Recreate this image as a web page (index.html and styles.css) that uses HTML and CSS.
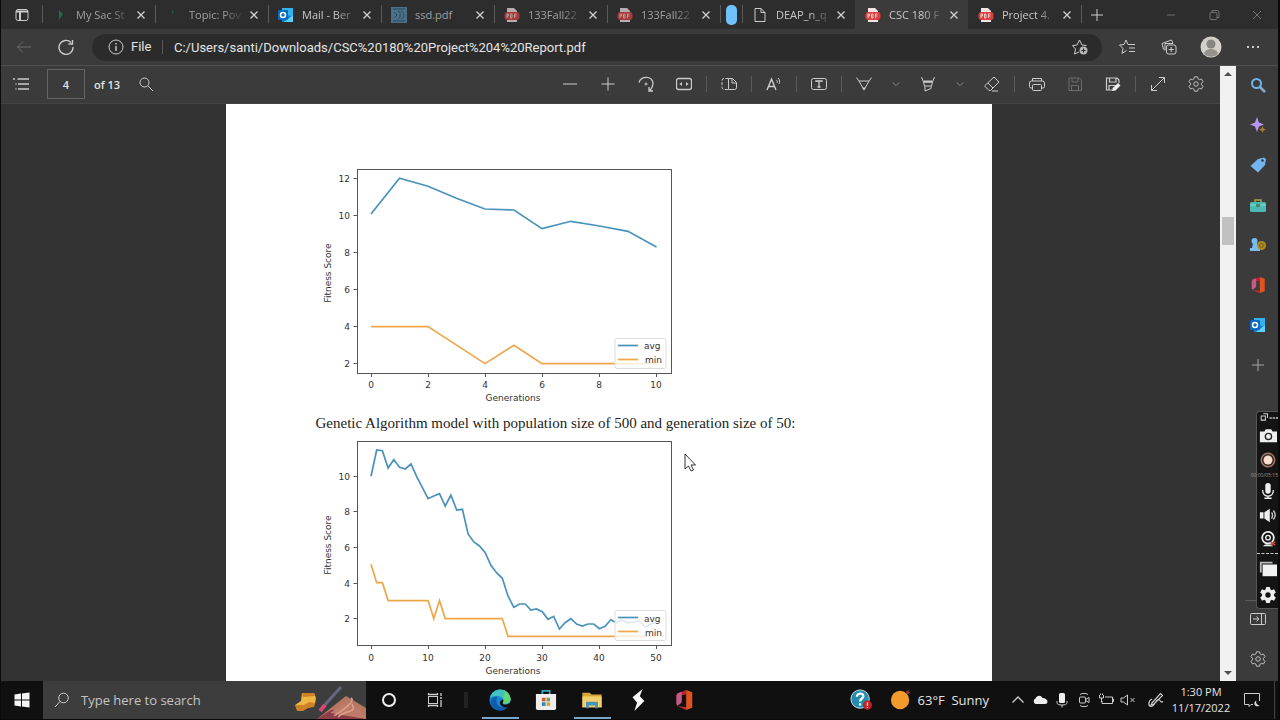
FILE: index.html
```
<!DOCTYPE html>
<html lang="en">

<head>
    <meta charset="UTF-8">
    <meta name="viewport" content="width=device-width, initial-scale=1.0">
    <link rel="stylesheet" href="styles.css">
    <title>CSC 180 Project 4 Report.pdf</title>
</head>

<body>

    <!-- shared icons -->
    <svg class="defs" width="0" height="0">
        <symbol id="i-close" viewBox="0 0 16 16"><path d="M4 4l8 8M12 4l-8 8" /></symbol>
        <symbol id="i-pdf" viewBox="0 0 16 16">
            <path d="M3 1h7l3 3v11H3z" fill="#f3e4e2" stroke="none" />
            <rect x="0.500" y="5" width="15" height="8" rx="3" fill="#d8413f" stroke="none" />
            <path d="M3 11V7h1.500v2H3M6.500 7v4h1.500V7zM10.500 11V7h2M10.500 9h2" stroke="#f6c9c5" stroke-width="1" />
        </symbol>
        <symbol id="i-chevron" viewBox="0 0 12 12"><path d="M2 4l4 4 4-4" /></symbol>
        <symbol id="i-gear" viewBox="0 0 20 20">
            <path d="M8.300 2h3.400l.6 2.300 1.500.9 2.300-.7 1.700 2.900-1.700 1.700v1.800l1.700 1.700-1.700 2.900-2.300-.7-1.500.9-.6 2.300H8.300l-.6-2.300-1.500-.9-2.300.7-1.700-2.900 1.700-1.700V9.100L2.200 7.400l1.700-2.900 2.300.7 1.500-.9z" />
            <circle cx="10" cy="10" r="2.500" />
        </symbol>
        <symbol id="i-office" viewBox="0 0 20 20">
            <path d="M12 1L4 4v11l3-2V6l5-1z" fill="#b3263a" stroke="none" />
            <path d="M4 4l4-1.500V12l-4 3.500-1-2V6z" fill="#c65a83" stroke="none" />
            <path d="M12 1l5.500 2v14L12 19z" fill="#e2521d" stroke="none" />
            <path d="M4 15.500l8 1V19z" fill="#c9301c" stroke="none" />
        </symbol>
        <symbol id="i-outlook" viewBox="0 0 16 16">
            <rect x="4" y="1" width="11" height="9" fill="#35b1ee" stroke="none" />
            <path d="M4 8l11 1v6H4z" fill="#1180d4" stroke="none" />
            <path d="M15 8v7H6z" fill="#5fd0f7" stroke="none" />
            <rect x="0" y="3" width="10" height="10" rx="1" fill="#0a69c0" stroke="none" />
            <circle cx="5" cy="8" r="2.500" stroke="#fff" stroke-width="1.500" />
        </symbol>
    </svg>

    <div class="tab-bar">
        <button class="tab-actions" aria-label="Tab actions"><svg class="icon" viewBox="0 0 16 16"><rect x="2" y="2.500" width="12" height="11" rx="2" /><path d="M2 4.500h12M6 5v8" stroke-width="2" /></svg></button>
        <div class="tab dim">
            <svg class="favicon" viewBox="0 0 16 16"><path d="M7 3l4 4-4 6z" fill="#246b40" stroke="none" /></svg>
            <span class="tab-title">My Sac St</span>
            <button class="tab-close" aria-label="Close tab"><svg><use href="#i-close" /></svg></button>
        </div>
        <div class="tab dim">
            <svg class="favicon" viewBox="0 0 16 16"><path d="M7 3l2 2-2 3z" fill="#24583a" stroke="none" /></svg>
            <span class="tab-title">Topic: Pov</span>
            <button class="tab-close" aria-label="Close tab"><svg><use href="#i-close" /></svg></button>
        </div>
        <div class="tab">
            <svg class="favicon"><use href="#i-outlook" /></svg>
            <span class="tab-title">Mail - Ber</span>
            <button class="tab-close" aria-label="Close tab"><svg><use href="#i-close" /></svg></button>
        </div>
        <div class="tab dim">
            <svg class="favicon" viewBox="0 0 16 16"><rect width="16" height="16" fill="#4b7188" stroke="none" /><path d="M3 5l3 3-3 3M7 4c3 0 3 8 0 8M10 4c4 1 4 7 0 8M2 2h12M2 14h12" stroke="#29495f" /></svg>
            <span class="tab-title short">ssd.pdf</span>
            <button class="tab-close" aria-label="Close tab"><svg><use href="#i-close" /></svg></button>
        </div>
        <div class="tab dim">
            <svg class="favicon faded"><use href="#i-pdf" /></svg>
            <span class="tab-title">133Fall22</span>
            <button class="tab-close" aria-label="Close tab"><svg><use href="#i-close" /></svg></button>
        </div>
        <div class="tab dim">
            <svg class="favicon faded"><use href="#i-pdf" /></svg>
            <span class="tab-title">133Fall22</span>
            <button class="tab-close" aria-label="Close tab"><svg><use href="#i-close" /></svg></button>
        </div>
        <button class="tab-group" aria-label="Tab group"><span class="pill"></span></button>
        <div class="tab">
            <svg class="favicon" viewBox="0 0 16 16"><path d="M3 1.500h6l4 4v9H3zM9 1.500v4h4" /></svg>
            <span class="tab-title">DEAP_n_q</span>
            <button class="tab-close" aria-label="Close tab"><svg><use href="#i-close" /></svg></button>
        </div>
        <div class="tab active">
            <svg class="favicon"><use href="#i-pdf" /></svg>
            <span class="tab-title">CSC 180 F</span>
            <button class="tab-close" aria-label="Close tab"><svg><use href="#i-close" /></svg></button>
        </div>
        <div class="tab">
            <svg class="favicon"><use href="#i-pdf" /></svg>
            <span class="tab-title">Project 4.</span>
            <button class="tab-close" aria-label="Close tab"><svg><use href="#i-close" /></svg></button>
        </div>
        <button class="new-tab" aria-label="New tab"><svg class="icon" viewBox="0 0 16 16"><path d="M8 2v12M2 8h12" /></svg></button>
        <div class="window-buttons">
            <button aria-label="Minimize"><svg class="icon" viewBox="0 0 16 16"><path d="M4 8h8" /></svg></button>
            <button aria-label="Restore"><svg class="icon" viewBox="0 0 16 16"><rect x="4" y="5.500" width="7" height="7" rx="1" /><path d="M6 5.500v-2h5a2 2 0 0 1 2 2v5h-2" /></svg></button>
            <button aria-label="Close"><svg class="icon" viewBox="0 0 16 16"><path d="M4 4l8 8M12 4l-8 8" /></svg></button>
        </div>
    </div>

    <div class="address-bar">
        <button class="nav-btn disabled" aria-label="Back"><svg class="icon" viewBox="0 0 16 16"><path d="M15 8H1.500M7 2.500L1.500 8 7 13.500" /></svg></button>
        <button class="nav-btn" aria-label="Refresh"><svg class="icon" viewBox="0 0 16 16"><path d="M13 3.500A7 7 0 1 0 15 8M14.500 1v4h-4" stroke-width="1.400" /></svg></button>
        <div class="omnibox">
            <svg class="icon" viewBox="0 0 16 16"><circle cx="8" cy="8" r="7" /><path d="M8 7v5M8 4v1.500" stroke-width="1.400" /></svg>
            <label class="scheme" for="url">File</label>
            <input class="url" id="url" type="text" value="C:/Users/santi/Downloads/CSC%20180%20Project%204%20Report.pdf">
            <button class="star" aria-label="Add to favorites"><svg class="icon" viewBox="0 0 16 16"><path d="M7 13l-4.500 2 1-5L0.500 6.500l4.500-.5 2.500-5 2.500 5 4.500.5" /><circle cx="11.500" cy="11.500" r="4" fill="#b5b5b5" stroke="none" /><path d="M11.500 9.500v4M9.500 11.500h4" stroke="#2b2b2b" /></svg></button>
        </div>
        <div class="browser-buttons">
            <button aria-label="Favorites"><svg class="icon" viewBox="0 0 16 16"><path d="M9 5.500h7M10 9h6M10 12.500h6M7.500 11.500L3 14.500l1-5L0.500 6l4.500-.5L7 1l2 4.500" /></svg></button>
            <button aria-label="Collections"><svg class="icon" viewBox="0 0 16 16"><path d="M4 11.500L2.500 10 1 4.500 10.500 1l1.500 3" /><path d="M4 11V4.500h8" /><rect x="5.500" y="6" width="9.500" height="9" rx="2" /><path d="M10.200 8v5M7.700 10.500h5" /></svg></button>
            <button aria-label="Profile"><svg class="avatar" viewBox="0 0 22 22"><circle cx="11" cy="11" r="10.500" fill="#d4d1cb" /><circle cx="11" cy="8" r="4.500" fill="#898681" /><path d="M4 18a7 5 0 0 1 14 0 10 10 0 0 1-14 0z" fill="#96938e" /></svg></button>
            <button aria-label="Settings and more"><svg class="icon" viewBox="0 0 16 16"><path d="M2 8h2M7 8h2M12 8h2" stroke-width="2" /></svg></button>
        </div>
    </div>

    <div class="main">
        <div class="reader">
            <div class="pdf-toolbar">
                <button class="tool" aria-label="Contents"><svg class="icon" viewBox="0 0 16 16"><path d="M0 3h2M4.500 3H16M5 8h11M5 13h11M2.500 8h1M2.500 13h1" stroke-width="1.300" /></svg></button>
                <input class="page-number" id="page" type="text" value="4">
                <label class="page-total" for="page">of 13</label>
                <button class="tool" aria-label="Find"><svg class="icon" viewBox="0 0 16 16"><circle cx="6.500" cy="6.500" r="4.500" /><path d="M10 10l5 5" /></svg></button>

                <div class="tools">
                    <button class="tool" aria-label="Zoom out"><svg class="icon" viewBox="0 0 16 16"><path d="M1 8h14" /></svg></button>
                    <button class="tool" aria-label="Zoom in"><svg class="icon" viewBox="0 0 16 16"><path d="M1.500 8h13M8 1.500v13" /></svg></button>
                    <button class="tool" aria-label="Rotate"><svg class="icon" viewBox="0 0 16 16"><path d="M1 6.500C3-0.500 14-0.500 15 7c.3 3-1 5-3 7.500M11 11v4h4" stroke-width="1.300" /><circle cx="8" cy="8" r="1" /></svg></button>
                    <button class="tool" aria-label="Fit to width"><svg class="icon" viewBox="0 0 16 16"><rect x="0.500" y="2.500" width="15" height="11" rx="2" stroke-width="1.300" /><path d="M6 6L3.500 8 6 10zM10 6l2.500 2-2.500 2z" fill="#ccc" stroke="none" /></svg></button>
                    <span class="divider"></span>
                    <button class="tool" aria-label="Page view"><svg class="icon" viewBox="0 0 16 16"><path d="M7.500 2.500H3a2 2 0 0 0-2 2v7a2 2 0 0 0 2 2h4.500" stroke-dasharray="3 1.500" /><path d="M7.500 2.500h4l4 4v5a2 2 0 0 1-2 2h-6zM11 3v4h4" /></svg></button>
                    <span class="divider"></span>
                    <button class="tool" aria-label="Read aloud"><svg class="icon" viewBox="0 0 16 16"><path d="M1 14L5.500 3 10 14M2.500 10.500h6" stroke-width="1.400" /><path d="M10.500 4c1 1 1 2 .5 3M12 2c2 2 2 4 1 6" /></svg></button>
                    <span class="divider"></span>
                    <button class="tool" aria-label="Add text"><svg class="icon" viewBox="0 0 16 16"><rect x="0.500" y="2.500" width="15" height="11" rx="2" /><path d="M5 6V5h6v1M8 5v6M6.500 11h3" stroke-width="1.300" /></svg></button>
                    <span class="divider"></span>
                    <button class="tool" aria-label="Draw"><svg class="icon" viewBox="0 0 16 16"><path d="M0.500 1.500L3 5h10l2.500-3.500M3 5l5 9 5-9" /><path d="M6.300 11.500h3.400L8 14.500z" fill="#ccc" stroke="none" /></svg></button>
                    <button class="tool-menu" aria-label="Draw options"><svg><use href="#i-chevron" /></svg></button>
                    <button class="tool" aria-label="Highlight"><svg class="icon" viewBox="0 0 16 16"><path d="M1.500 1l2 5h9l2-5M3.500 6l1 4h7l1-4M5 10v5l6-2.500V10" /><path d="M4 5.500h8" stroke-width="2" /></svg></button>
                    <button class="tool-menu" aria-label="Highlight options"><svg><use href="#i-chevron" /></svg></button>
                    <button class="tool" aria-label="Erase"><svg class="icon" viewBox="0 0 16 16"><path d="M10 1l5 5-8.500 8.500H5l-4-4v-1zM4 7l5 5M8 15h6" stroke-linejoin="round" /></svg></button>
                    <span class="divider"></span>
                    <button class="tool" aria-label="Print"><svg class="icon" viewBox="0 0 16 16"><path d="M3.500 5V2.500h9V5M3.500 12H2a1.500 1.500 0 0 1-1.500-1.500V7A2 2 0 0 1 2.500 5h11a2 2 0 0 1 2 2v3.500A1.500 1.500 0 0 1 14 12h-1.500" /><rect x="3.500" y="8.500" width="9" height="6" rx="1" /></svg></button>
                    <button class="tool disabled" aria-label="Save"><svg class="icon" viewBox="0 0 16 16"><path d="M2 2h10.500L14.500 4v10.500H2zM5 2v4h6V2M4.500 14V9.500h7V14" /></svg></button>
                    <button class="tool" aria-label="Save as"><svg class="icon" viewBox="0 0 16 16"><path d="M7 14H1.500V2H12l2 2v3M4.500 2v4H11V2M4 14V9.500h7" stroke-width="1.200" /><path d="M7 15l.7-3L13 7l2.500 2.500-5 5z" fill="#eee" stroke="none" /></svg></button>
                    <span class="divider"></span>
                    <button class="tool" aria-label="Full screen"><svg class="icon" viewBox="0 0 16 16"><path d="M1.500 14.500l13-13M9 1.500h5.500V7M1.500 9v5.500H7" /></svg></button>
                    <button class="tool" aria-label="PDF settings"><svg class="icon large"><use href="#i-gear" /></svg></button>
                </div>
            </div>

            <div class="viewer">
                <div class="page">
                    <svg class="chart" viewBox="0 0 364 244">
                        <polyline class="avg" points="55,51 83.500,15.300 112,23.300 140.500,35.300 169,46 198,47 226,65.600 255,58.300 283.500,63 312,68.300 340.500,84" />
                        <polyline class="min" points="55,163.600 112,163.600 169,200.600 198,182.300 226,200.600 340.500,200.600" />
                        <rect class="legend" x="299" y="175.500" width="51" height="30" rx="2" />
                        <path class="avg" d="M302 182.500h20" />
                        <path class="min" d="M302 196.500h20" />
                        <text x="328" y="186">avg</text>
                        <text x="329" y="200">min</text>
                        <rect class="frame" x="41.500" y="6.500" width="314" height="204" />
                        <path class="ticks" d="M37.500 15.500h4M37.500 52.500h4M37.500 89.500h4M37.500 126.500h4M37.500 163.500h4M37.500 200.500h4M55.500 210v4M112.500 210v4M169.500 210v4M226.500 210v4M283.500 210v4M340.500 210v4" />
                        <g class="y-labels">
                            <text x="34" y="19">12</text><text x="34" y="56">10</text><text x="34" y="93">8</text>
                            <text x="34" y="130">6</text><text x="34" y="167">4</text><text x="34" y="204">2</text>
                        </g>
                        <g class="x-labels">
                            <text x="55" y="225">0</text><text x="112" y="225">2</text><text x="169" y="225">4</text>
                            <text x="226" y="225">6</text><text x="283" y="225">8</text><text x="340" y="225">10</text>
                            <text x="197" y="238">Generations</text>
                            <text transform="translate(15 110) rotate(-90)">Fitness Score</text>
                        </g>
                    </svg>
                    <p class="caption">Genetic Algorithm model with population size of 500 and generation size of 50:</p>
                    <svg class="chart" viewBox="0 0 364 244">
                        <polyline class="avg" points="55,41.300 60.700,15 66.400,15.700 72.100,33 77.800,24.700 83.600,32.300 89.300,34 95,29 100.700,41.700 106.400,52.700 112.100,63.700 117.800,61 123.500,58.700 129.200,71 134.900,60 140.700,75 146.400,74.300 152.100,99 157.800,107 163.500,111 169.200,117.700 174.900,130.300 180.600,137.700 186.300,143.300 192,161 197.800,172.300 203.500,169 209.200,169 214.900,175 220.600,174 226.300,176.700 232,184.300 237.700,181.300 243.400,194 249.100,187.700 254.900,183.700 260.600,189 266.300,191 272,189 277.700,189 283.400,193.700 289.100,191.300 294.800,184.700 300.500,187.700 306.200,185 312,188 317.700,187 323.400,186 329.100,192 334.800,189 340.500,187" />
                        <polyline class="min" points="55,129.300 60.700,147.700 66.400,147.700 72.100,165.600 112.100,165.600 117.800,183.600 123.500,165.600 129.200,183.600 186.300,183.600 192,201.300 340.500,201.300" />
                        <rect class="legend" x="299" y="175.500" width="51" height="30" rx="2" />
                        <path class="avg" d="M302 182.500h20" />
                        <path class="min" d="M302 196.500h20" />
                        <text x="328" y="187">avg</text>
                        <text x="329" y="201">min</text>
                        <rect class="frame" x="41.500" y="6.500" width="314" height="204" />
                        <path class="ticks" d="M37.500 41.500h4M37.500 76.500h4M37.500 112.500h4M37.500 148.500h4M37.500 183.500h4M55.500 210v4M112.500 210v4M169.500 210v4M226.500 210v4M283.500 210v4M340.500 210v4" />
                        <g class="y-labels">
                            <text x="34" y="45">10</text><text x="34" y="80">8</text><text x="34" y="116">6</text>
                            <text x="34" y="152">4</text><text x="34" y="187">2</text>
                        </g>
                        <g class="x-labels">
                            <text x="55" y="226">0</text><text x="112" y="226">10</text><text x="169" y="226">20</text>
                            <text x="226" y="226">30</text><text x="283" y="226">40</text><text x="340" y="226">50</text>
                            <text x="197" y="239">Generations</text>
                            <text transform="translate(15 110) rotate(-90)">Fitness Score</text>
                        </g>
                    </svg>
                </div>
            </div>
        </div>

        <div class="scrollbar">
            <svg class="arrow" viewBox="0 0 10 10"><path d="M1 7l4-4 4 4z" /></svg>
            <div class="thumb"></div>
            <svg class="arrow bottom" viewBox="0 0 10 10"><path d="M1 3l4 4 4-4z" /></svg>
        </div>

        <div class="sidebar">
            <button aria-label="Search"><svg class="icon" viewBox="0 0 16 16"><path d="M10 10l5 5" stroke="#8aa9c4" stroke-width="2.500" /><circle cx="6.500" cy="6.500" r="4.500" stroke="#6db6ec" stroke-width="2" /></svg></button>
            <button aria-label="Discover"><svg class="icon" viewBox="0 0 16 16"><path d="M7 0l2 5.500L14 7.500 9 9.500 7 15 5 9.500 0 7.500l5-2z" fill="#b795f0" stroke="none" /><path d="M12.500 9l1 2.500 2.500 1-2.500 1-1 2.500-1-2.500-2.500-1 2.500-1z" fill="#a8803e" stroke="none" /></svg></button>
            <button aria-label="Shopping"><svg class="icon" viewBox="0 0 16 16"><path d="M8 2l6-1.500 2 1.500-1 6-7 7.500L0.500 9z" fill="#72b5f2" stroke="none" /><circle cx="12.500" cy="3.500" r="1.200" fill="#333" stroke="none" /></svg></button>
            <button aria-label="Tools"><svg class="icon" viewBox="0 0 16 16"><path d="M5 5V3h6v2" stroke="#a9a052" stroke-width="1.500" /><rect x="0" y="5" width="16" height="10" rx="1.500" fill="#4cb9b4" stroke="none" /><path d="M0 8h16" stroke="#8edbd5" /><rect x="6" y="7" width="4" height="3" fill="#3b8d63" stroke="none" /></svg></button>
            <button aria-label="Games"><svg class="icon" viewBox="0 0 16 16"><circle cx="4.500" cy="4" r="3" fill="#78bbee" stroke="none" /><path d="M3 6h4l1 5h2v3H0v-3h2z" fill="#78bbee" stroke="none" /><circle cx="11.500" cy="8.500" r="4.500" fill="#b48c22" stroke="none" /><circle cx="11.500" cy="8.500" r="2" stroke="#725819" /></svg></button>
            <button aria-label="Office"><svg class="icon large"><use href="#i-office" /></svg></button>
            <button aria-label="Outlook"><svg class="icon"><use href="#i-outlook" /></svg></button>
            <button aria-label="Add"><svg class="icon" viewBox="0 0 16 16"><path d="M2 8h12M8 2v12" stroke="#a5a5a5" /></svg></button>
            <div class="sidebar-end">
                <button aria-label="Hide sidebar"><svg class="icon" viewBox="0 0 16 16"><rect x="0.500" y="2.500" width="15" height="11" rx="1" /><path d="M11.500 3v10M3 8h5.500M6.500 5.500L9 8l-2.500 2.500" /></svg></button>
                <button aria-label="Sidebar settings"><svg class="icon large"><use href="#i-gear" /></svg></button>
            </div>
        </div>
    </div>

    <div class="taskbar">
        <button class="start" aria-label="Start"><svg class="icon" viewBox="0 0 16 16"><path d="M0.500 2.500L7 1.500V7.500H0.500zM8 1.400l7.500-1V7.500H8zM0.500 8.500H7v6l-6.500-1zM8 8.500h7.500v7L8 14.600z" fill="#f4f4f4" stroke="none" /></svg></button>
        <div class="search">
            <svg class="icon" viewBox="0 0 16 16"><circle cx="9.500" cy="6" r="4.800" /><path d="M6 9.500L1 15" /></svg>
            <input type="text" placeholder="Type here to search" aria-label="Type here to search">
            <svg class="search-art" viewBox="0 0 72 36">
                <path d="M8 10h12l2 5-1 6-7 4H3l-2-3 6-4z" fill="#f0b643" />
                <path d="M8 10h12l1 3-12 1zM1 22h9l5-3 6 1-1 4-6 1-5 3H3z" fill="#cf8127" />
                <path d="M23 36l29-23 20 12v11z" fill="#b57961" />
                <path d="M23 36l14-9 15-1 20 10z" fill="#8d3d49" />
                <path d="M36 30l17-12 19 14v4z" fill="#bd7b68" />
                <path d="M28 25L47 4" stroke="#656780" stroke-width="3" />
                <path d="M26 28l5-6" stroke="#d54872" stroke-width="4" />
                <path d="M40 33c9-6 22-15 17-18M44 34c8-8 19-3 14-13" stroke="#dba18d" stroke-width="1.500" fill="none" />
            </svg>
        </div>
        <div class="apps">
            <button aria-label="Cortana"><svg class="icon" viewBox="0 0 16 16"><circle cx="8" cy="8" r="6" stroke="#eee" stroke-width="2" /></svg></button>
            <button aria-label="Task view"><svg class="icon" viewBox="0 0 16 16"><rect x="1.500" y="4.500" width="9" height="7" /><path d="M1.500 1v1.500h9V1M1.500 15v-1.500h9V15M14 1v3M14 8v7M13 6h2" stroke-width="1.300" /></svg></button>
            <span class="handle"></span>
            <button class="open" aria-label="Microsoft Edge"><svg class="app-icon" viewBox="0 0 24 24"><circle cx="12" cy="12" r="11.500" fill="#1788d1" /><path d="M1 10C3 2 9 0 14 .7 20 1.500 24 7 23.500 12c-.5 4-6 5-9 3 2-3 0-7-4-7C6 8 2 8 1 10z" fill="#40c2c0" /><path d="M14 .7C20 1.500 24 7 23.500 12c-.5 4-6 5-9 3 2-3 1-8 3-12z" fill="#63d579" /><path d="M8 12c0 7 6 10 13 7-5 6-16 6-19-2-1-4 1-8 7-9z" fill="#125cae" /><path d="M15 11c2 3-1 4 0 5 2 2 6 1 8-1l3 4-5 1c-5 1-10-2-9-6z" fill="#101010" /></svg></button>
            <button aria-label="Microsoft Store"><svg class="app-icon" viewBox="0 0 24 24"><path d="M8 6V2h8v4" fill="none" stroke="#3d9fba" stroke-width="2" /><path d="M1 5.500h22V21a2 2 0 0 1-2 2H3a2 2 0 0 1-2-2z" fill="#eee" /><path d="M7.500 9.500h4v4h-4z" fill="#d05a42" /><path d="M12.500 9.500h4v4h-4z" fill="#77a452" /><path d="M7.500 14.500h4v4h-4z" fill="#3686b6" /><path d="M12.500 14.500h4v4h-4z" fill="#d7a63a" /></svg></button>
            <button class="open" aria-label="File Explorer"><svg class="app-icon" viewBox="0 0 24 24"><path d="M1.500 4h8l2 2h11v14h-21z" fill="#d6a53b" /><path d="M1.500 8h21v12h-21z" fill="#f3cf6c" /><path d="M5.500 14h13v7h-3v-3h-7v3h-3z" fill="#4794b7" /></svg></button>
            <button aria-label="S app"><svg class="app-icon" viewBox="0 0 24 24"><path d="M17 0l-3 8 5 5-11 11 3-9-5-6z" fill="#f5f5f5" /><path d="M12 8l5 6-3 2-5-6z" fill="#fff" /></svg></button>
            <button aria-label="Office"><svg class="app-icon"><use href="#i-office" /></svg></button>
        </div>
        <div class="tray">
            <button class="help" aria-label="Get help"><svg class="app-icon" viewBox="0 0 24 24"><circle cx="11" cy="11" r="10" fill="#258bb0" stroke="#d7e8ee" /><path d="M7.500 8.500c0-5 8-4.500 7 0-.5 2-3.500 2-3.500 5M11 15.500v2.500" fill="none" stroke="#fff" stroke-width="2.500" /><circle cx="19" cy="17.500" r="5" fill="#c22126" /><path d="M19 14.500v4M19 19.500v1.200" stroke="#f1c9c9" stroke-width="1.500" /></svg></button>
            <button class="weather"><svg class="app-icon" viewBox="0 0 24 24"><circle cx="11" cy="12" r="10" fill="#f29a2b" /><path d="M17 3l3-2 2 3-3 2z" fill="#893222" /></svg>63°F&nbsp; Sunny</button>
            <div class="status">
                <button aria-label="Show hidden icons"><svg class="icon" viewBox="0 0 16 16"><path d="M2.500 10.500L8 5l5.500 5.500" stroke-width="1.300" /></svg></button>
                <button aria-label="OneDrive"><svg class="icon" viewBox="0 0 16 16"><path d="M3.500 12a3 3 0 0 1 0-5.500C5 3 9 3 10.500 6c3 0 5 2 5 3.500a2.500 2.500 0 0 1-2.500 2.500z" fill="#eee" stroke="none" /></svg></button>
                <button aria-label="Microphone"><svg class="icon" viewBox="0 0 16 16"><rect x="5" y="1" width="6" height="10" rx="1.500" fill="#eee" stroke="none" /><path d="M3 9v1.500c0 2 2 2.500 5 2.500s5-.5 5-2.500V9M8 13v2.500" /></svg></button>
                <button aria-label="Meet now"><svg class="icon" viewBox="0 0 16 16"><rect x="3.500" y="5" width="6" height="6" rx="1" /><path d="M9.500 7.500L13 5.500v5l-3.500-2M4 2.500c2-1.500 6-1.500 8 0M4 13.500c2 1.500 6 1.500 8 0" /></svg></button>
                <button aria-label="Battery"><svg class="icon" viewBox="0 0 16 16"><path d="M7 5h7.500v6.500H4V9M14.500 7h1v2.500h-1M1.500 3v3h4V3M3.500 6v4M2.500 1.500V3M4.500 1.500V3" /></svg></button>
                <button aria-label="Muted"><svg class="icon" viewBox="0 0 16 16"><path d="M1 6v4h2.500L7.500 13V3L3.500 6zM10.500 6l4 4M14.500 6l-4 4" /></svg></button>
            </div>
            <button class="pen" aria-label="Windows Ink"><svg class="icon" viewBox="0 0 16 16"><path d="M4 11L12.500 1.500l2 2L6 12l-3 1zM4 7C0 9 0 14 3 14.500c4 0 4-6 7-7 3 0 2 4 5 2" stroke-width="1.200" /></svg></button>
            <button class="clock"><span>1:30 PM</span><span>11/17/2022</span></button>
            <button class="notifications" aria-label="Notifications"><svg class="icon" viewBox="0 0 16 16"><path d="M9 12.500H7L5 14.500v-2H0.500v-11h15V9" /><path d="M12.500 8.500a3 3 0 1 0 3 5 3.500 3.500 0 0 1-3-5z" fill="#ddd" stroke="none" /></svg></button>
        </div>
    </div>

    <!-- floating recorder panel -->
    <div class="recorder">
        <svg class="rec-top" viewBox="0 0 20 10"><path d="M4 3h4v4H4zM6 1h4v4" fill="none" stroke="#ccc" /><path d="M12 5h2M15 5h2M18 5h2" stroke="#ccc" stroke-width="1.500" /></svg>
        <button aria-label="Screenshot"><svg viewBox="0 0 20 20"><path d="M1 5h5l1.500-2.500h6L15 5h5v12H1z" fill="#eee" /><circle cx="10.500" cy="10.500" r="3.500" fill="none" stroke="#222" stroke-width="1.500" /></svg></button>
        <button aria-label="Record"><svg viewBox="0 0 20 20"><circle cx="10" cy="10" r="7.500" fill="#352923" stroke="#a47969" stroke-width="1.500" /><circle cx="10" cy="10" r="5" fill="#f8dcd0" /></svg></button>
        <span class="rec-time">00:00/05:15</span>
        <button aria-label="Microphone"><svg viewBox="0 0 20 20"><rect x="7" y="1" width="6" height="12" rx="3" fill="#eee" /><path d="M4 9c0 9 12 9 12 0M10 15v3M6 18h8" fill="none" stroke="#eee" stroke-width="1.500" /></svg></button>
        <button aria-label="Speaker"><svg viewBox="0 0 20 20"><path d="M1 7h4v7H1zM6 7l6-4v15l-6-4z" fill="#eee" /><path d="M14 7q2 3 0 7M16 5q4 5 0 10" fill="none" stroke="#ccc" stroke-width="1.500" /></svg></button>
        <button aria-label="Webcam"><svg viewBox="0 0 20 20"><circle cx="10" cy="8.500" r="6.500" fill="none" stroke="#eee" stroke-width="2" /><circle cx="10" cy="8.500" r="2.500" fill="none" stroke="#eee" stroke-width="1.500" /><path d="M4 18l3-2h6l3 2z" fill="#eee" /><path d="M13 13l5 4M18 13l-5 4" stroke="#d84c46" stroke-width="1.500" /></svg></button>
        <button class="gallery" aria-label="Gallery"><svg viewBox="0 0 20 20"><path d="M1 2h14v2H3v10H1z" fill="#bbb" /><rect x="4" y="5" width="16" height="13" fill="#f2f2f2" /></svg></button>
        <button aria-label="Recorder settings"><svg viewBox="0 0 20 20"><path d="M8 1h4l.6 2.700 1.500.9 2.600-.9 2 3.400-2 1.900v2l2 1.900-2 3.400-2.600-.9-1.500.9L12 19H8l-.6-2.700-1.500-.9-2.600.9-2-3.400 2-1.900V9l-2-1.900 2-3.400 2.600.9 1.500-.9z" fill="#eee" /><circle cx="10" cy="10" r="3" fill="#141414" /></svg></button>
    </div>

    <svg class="cursor" viewBox="0 0 14 20"><path d="M1 1v15l3.500-3 2.500 5 2.500-1-2.500-5h4.500z" /></svg>

</body>

</html>
```

FILE: styles.css
```
* {
    box-sizing: border-box;
}

body {
    display: flex;
    flex-direction: column;
    height: 100vh;
    margin: 0;
    padding: 0 2px 1px 1px;
    overflow: hidden;
    background-color: #0a0a0a;
    color: #e4e4e4;
    font-family: "Open Sans", "Noto Sans", sans-serif;
    font-size: 11px;
}

button {
    display: flex;
    align-items: center;
    justify-content: center;
    flex-shrink: 0;
    padding: 0;
    border: none;
    background: none;
    color: inherit;
    font: inherit;
}

input {
    min-width: 0;
    border: none;
    outline: none;
    background: none;
    color: inherit;
    font: inherit;
}

svg {
    flex-shrink: 0;
    fill: none;
    stroke: none;
}

.defs {
    position: absolute;
}

.icon {
    width: 16px;
    height: 16px;
    stroke: #ccc;
}

.icon.large {
    width: 18px;
    height: 18px;
}

.app-icon {
    width: 24px;
    height: 24px;
}

/* tabs */
.tab-bar {
    display: flex;
    flex-shrink: 0;
    height: 29px;
    background-color: #2d2d2d;
}

.tab-actions {
    width: 41px;
}

.tab {
    display: flex;
    align-items: center;
    flex: 0 1 113px;
    min-width: 0;
    padding: 0 7px 0 10px;
    background: linear-gradient(#5a5a5a, #5a5a5a) 0 5px / 1px 18px no-repeat;
}

.tab.active {
    background: #3b3b3b;
}

.tab.active + .tab {
    background: none;
}

.favicon {
    width: 16px;
    height: 16px;
    stroke: #ccc;
}

.favicon.faded {
    opacity: 0.7;
}

.tab-title {
    flex: 1;
    margin: 0 2px 0 8px;
    overflow: hidden;
    white-space: nowrap;
    color: #c8c8c8;
    -webkit-mask-image: linear-gradient(to right, #000 60%, transparent);
    mask-image: linear-gradient(to right, #000 60%, transparent);
}

.tab-title.short {
    -webkit-mask-image: none;
    mask-image: none;
}

.tab.dim .tab-title {
    color: #a0a0a0;
}

.tab-close,
.tab-close svg {
    width: 14px;
    height: 14px;
    stroke: #d0d0d0;
    stroke-width: 1.5;
}

.tab-group {
    width: 22px;
    background: linear-gradient(#5a5a5a, #5a5a5a) 0 5px / 1px 18px no-repeat;
}

.pill {
    width: 11px;
    height: 20px;
    border-radius: 5px;
    background-color: #6fc0fb;
}

.new-tab {
    width: 32px;
    background: linear-gradient(#5a5a5a, #5a5a5a) 0 5px / 1px 18px no-repeat;
}

.window-buttons {
    display: flex;
    margin-left: auto;
}

.window-buttons button {
    width: 43px;
}

.window-buttons .icon {
    stroke: #707070;
}

/* address bar */
.address-bar {
    display: flex;
    align-items: center;
    flex-shrink: 0;
    height: 37px;
    padding-left: 2px;
    border-bottom: 1px solid #505050;
    background-color: #3b3b3b;
}

.nav-btn {
    width: 42px;
}

.disabled .icon {
    stroke: #6c6c6c;
}

.omnibox {
    display: flex;
    align-items: center;
    flex: 1;
    height: 27px;
    margin-left: 5px;
    padding: 0 14px 0 16px;
    border-radius: 14px;
    background-color: #2b2b2b;
    font-family: Roboto, "Open Sans", sans-serif;
    font-size: 13px;
}

.scheme {
    width: 32px;
    margin-left: 7px;
    border-right: 1px solid #5a5a5a;
    line-height: 14px;
}

.url {
    flex: 1;
    padding: 0 0 0 11px;
}

.browser-buttons {
    display: flex;
    margin-left: 4px;
}

.browser-buttons button {
    width: 42px;
}

.browser-buttons button:last-child {
    margin-right: 4px;
}

.avatar {
    width: 22px;
    height: 22px;
}

/* reader */
.main {
    display: flex;
    flex: 1;
    min-height: 0;
}

.reader {
    display: flex;
    flex-direction: column;
    flex: 1;
    min-width: 0;
}

.pdf-toolbar {
    display: flex;
    align-items: center;
    flex-shrink: 0;
    height: 38px;
    padding: 0 5px 1px 1px;
    border-bottom: 1px solid #444;
    background-color: #3b3b3b;
    font-weight: 600;
}

.tool {
    width: 38px;
}

.tool-menu {
    width: 26px;
}

.tool-menu svg {
    width: 10px;
    height: 10px;
    stroke: #999;
}

.page-number {
    width: 38px;
    height: 30px;
    margin-left: 7px;
    border: 1px solid #646464;
    text-align: center;
}

.page-total {
    margin: 0 7px 0 9px;
}

.tools {
    display: flex;
    align-items: center;
    margin-left: auto;
}

.divider {
    width: 1px;
    height: 16px;
    margin: 0 3px;
    background-color: #5a5a5a;
}

.viewer {
    flex: 1;
    min-height: 0;
    padding-right: 4px;
    overflow: hidden;
    background-color: #333;
}

.page {
    max-width: 766px;
    min-height: 100%;
    margin: 0 auto;
    padding: 59px 90px 0;
    background-color: #fff;
}

.chart {
    display: block;
    width: 364px;
    height: 244px;
}

.chart text {
    fill: #333;
    font-family: "DejaVu Sans", sans-serif;
    font-size: 9px;
}

.avg,
.min {
    stroke: #4a92bb;
    stroke-width: 1.7;
}

.min {
    stroke: #eda64a;
}

.legend {
    fill: #fff;
    fill-opacity: 0.8;
    stroke: #ddd;
}

.frame,
.ticks {
    stroke: #555;
}

.y-labels {
    text-anchor: end;
}

.x-labels {
    text-anchor: middle;
}

.caption {
    margin: 0;
    padding-top: 4px;
    color: #222;
    font-family: "Liberation Serif", serif;
    font-size: 15px;
    line-height: 24px;
    white-space: nowrap;
}

.scrollbar {
    display: flex;
    flex-direction: column;
    align-items: center;
    width: 16px;
    padding: 3px 0;
    background-color: #f1f1f1;
}

.arrow {
    width: 10px;
    height: 10px;
    fill: #505050;
}

.arrow.bottom {
    margin-top: auto;
}

.thumb {
    width: 12px;
    height: 28px;
    margin-top: 138px;
    background-color: #c1c1c1;
}

/* sidebar */
.sidebar {
    display: flex;
    flex-direction: column;
    width: 42px;
    background-color: #3b3b3b;
}

.sidebar button {
    height: 40px;
    width: 100%;
    padding: 0 0 2px 2px;
}

.sidebar-end {
    margin-top: auto;
    padding-bottom: 1px;
    background: linear-gradient(#5a5a5a, #5a5a5a) 9px 0 / 26px 1px no-repeat;
}

/* taskbar */
.taskbar {
    display: flex;
    flex-shrink: 0;
    height: 38px;
    background-color: #101010;
}

.start {
    width: 42px;
}

.search {
    display: flex;
    align-items: center;
    flex: 0 1 323px;
    padding-left: 11px;
    background-color: #3d3d3d;
}

.search input {
    flex: 1;
    padding: 0 0 0 11px;
    font-size: 13px;
}

.search input::placeholder {
    color: #c4c4c4;
}

.search-art {
    width: 72px;
    height: 36px;
    align-self: flex-end;
}

.apps,
.tray,
.status {
    display: flex;
}

.apps button {
    width: 46px;
}

.apps .app-icon {
    width: 22px;
    height: 22px;
}

.apps .open {
    background: linear-gradient(#7ba7cc, #7ba7cc) center bottom / 37px 2px no-repeat;
}

.handle {
    align-self: center;
    width: 4px;
    height: 16px;
    margin: 0 9px 0 6px;
    background-color: #222;
}

.tray {
    margin-left: auto;
    padding-right: 3px;
}

.help {
    width: 30px;
}

.help .app-icon,
.weather .app-icon {
    width: 22px;
    height: 22px;
}

.weather {
    gap: 6px;
    margin: 0 18px 0 14px;
    font-size: 13px;
}

.status button {
    width: 22px;
}

.pen {
    width: 34px;
}

.clock {
    flex-direction: column;
    width: 56px;
    line-height: 16px;
}

.notifications {
    width: 46px;
    border-right: 1px solid #444;
}

/* recorder panel, lies over the sidebar */
.recorder {
    position: absolute;
    top: 411px;
    right: 2px;
    display: flex;
    flex-direction: column;
    width: 22px;
    height: 198px;
    border: 1px solid #555;
    border-right: none;
    border-radius: 4px 0 0 4px;
    background-color: #141414;
}

.rec-top {
    width: 21px;
    height: 12px;
}

.recorder button {
    height: 24px;
}

.recorder button svg {
    width: 18px;
    height: 18px;
}

.rec-time {
    align-self: flex-end;
    color: #999;
    font-size: 5px;
    line-height: 7px;
    white-space: nowrap;
}

.gallery {
    border-top: 1px dashed #ccc;
}

.recorder .gallery {
    height: 30px;
    margin-top: 2px;
}

.cursor {
    position: absolute;
    top: 453px;
    left: 684px;
    width: 14px;
    height: 20px;
    fill: #fff;
    stroke: #333;
}
```
